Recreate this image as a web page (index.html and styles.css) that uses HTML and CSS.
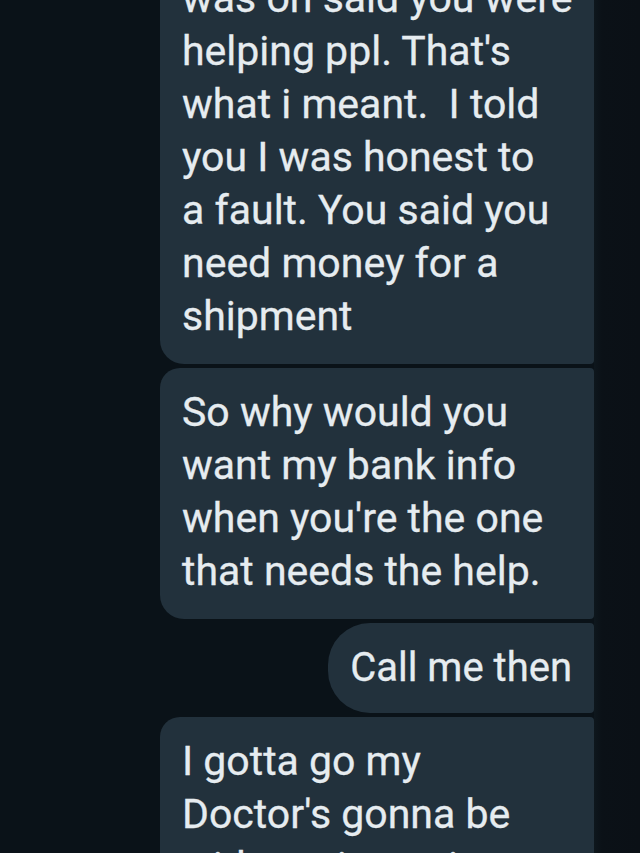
FILE: index.html
```html
<!DOCTYPE html>
<html lang="en">
<head>
<meta charset="utf-8">
<title>Messages</title>
<link rel="stylesheet" href="styles.css">
</head>
<body>
<main class="thread">
  <div class="list">
    <div class="bubble first">was on said you were<br>helping ppl. That's<br>what i meant.&nbsp; I told<br>you I was honest to<br>a fault. You said you<br>need money for a<br>shipment</div>
    <div class="bubble mid">So why would you<br>want my bank info<br>when you're the one<br>that needs the help.</div>
    <div class="bubble short">Call me then</div>
    <div class="bubble mid">I gotta go my<br>Doctor's gonna be<br>with me in a minute</div>
  </div>
  <div class="edge"></div>
</main>
</body>
</html>
```

FILE: styles.css
```css
html, body {
  margin: 0;
  padding: 0;
  background: #0a1218;
  height: 100%;
  overflow: hidden;
}

.thread {
  display: flex;
  height: 853px;
  overflow: hidden;
}

.list {
  flex: 1;
  display: flex;
  flex-direction: column;
  align-items: flex-end;
  gap: 4px;
  margin-top: -46px;
}

.edge {
  width: 46px;
  flex: none;
  background: linear-gradient(to right, #0e171d 0, #0b1117 8px, #0b1016 100%);
}

.bubble {
  background: #22313c;
  color: #e6ecf0;
  font-family: Roboto, "Noto Sans", sans-serif;
  font-size: 41px;
  line-height: 53px;
  padding: 18px 22px 21px 22px;
  box-sizing: border-box;
  width: 434px;
  border-radius: 20px 4px 4px 24px;
  white-space: nowrap;
  -webkit-text-stroke: 0.3px #e6ecf0;
}

.bubble.first {
  border-radius: 4px 4px 4px 24px;
}

.bubble.short {
  width: auto;
  padding: 18px 22px 19px 22px;
  font-size: 40px;
  border-radius: 42px 4px 4px 42px;
}
```
